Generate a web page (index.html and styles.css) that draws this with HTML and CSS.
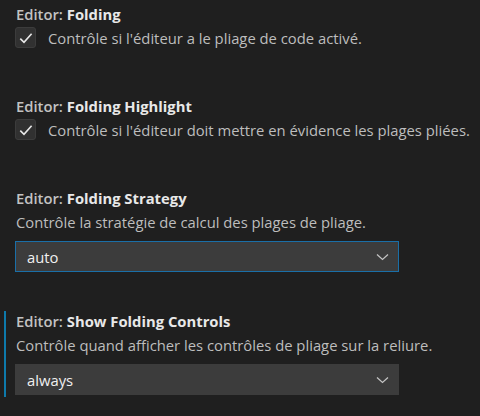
FILE: index.html
```html
<!DOCTYPE html>
<html lang="fr">
<head>
<meta charset="utf-8">
<link rel="stylesheet" href="styles.css">
</head>
<body>
<div class="list">
  <div class="item item-check">
    <div class="title"><span class="cat">Editor: </span><span class="key">Folding</span></div>
    <div class="check-row">
      <span class="checkbox"><svg width="18" height="18" viewBox="0 0 18 18"><path d="M3.3 9.6 L7 13.4 L14.6 4.8" fill="none" stroke="#e8e8e8" stroke-width="1.6"/></svg></span>
      <span class="desc">Contrôle si l'éditeur a le pliage de code activé.</span>
    </div>
  </div>
  <div class="item item-check">
    <div class="title"><span class="cat">Editor: </span><span class="key">Folding Highlight</span></div>
    <div class="check-row">
      <span class="checkbox"><svg width="18" height="18" viewBox="0 0 18 18"><path d="M3.3 9.6 L7 13.4 L14.6 4.8" fill="none" stroke="#e8e8e8" stroke-width="1.6"/></svg></span>
      <span class="desc">Contrôle si l'éditeur doit mettre en évidence les plages pliées.</span>
    </div>
  </div>
  <div class="item item-select">
    <div class="title"><span class="cat">Editor: </span><span class="key">Folding Strategy</span></div>
    <div class="desc block">Contrôle la stratégie de calcul des plages de pliage.</div>
    <div class="select focused"><span>auto</span><svg width="13" height="8" viewBox="0 0 13 8"><path d="M1 1.5 L6.5 6.5 L12 1.5" fill="none" stroke="#c5c5c5" stroke-width="1.2"/></svg></div>
  </div>
  <div class="item item-select row-focused">
    <div class="title"><span class="cat">Editor: </span><span class="key">Show Folding Controls</span></div>
    <div class="desc block">Contrôle quand afficher les contrôles de pliage sur la reliure.</div>
    <div class="select"><span>always</span><svg width="13" height="8" viewBox="0 0 13 8"><path d="M1 1.5 L6.5 6.5 L12 1.5" fill="none" stroke="#c5c5c5" stroke-width="1.2"/></svg></div>
  </div>
</div>
</body>
</html>
```
FILE: styles.css
```css
html, body {
  margin: 0;
  padding: 0;
  background: #1f1f1f;
  width: 480px;
  height: 416px;
  overflow: hidden;
}
body {
  font-family: "Open Sans", "Noto Sans", sans-serif;
  font-size: 14.8px;
  color: #cccccc;
}
.list {
  display: flex;
  flex-direction: column;
  padding-top: 4px;
}
.item {
  margin-left: 4px;
  border-left: 2px solid transparent;
  padding: 0 0 2px 9px;
  display: flex;
  flex-direction: column;
}
.item-check { margin-bottom: 46px; }
.item-select { margin-bottom: 37px; }
.row-focused { border-left-color: #0e7aab; }
.title {
  line-height: 20px;
  height: 20px;
  padding-left: 1px;
  white-space: nowrap;
}
.cat {
  font-weight: 600;
  color: #c2c2c2;
}
.key {
  font-weight: 700;
  color: #e8e8e8;
}
.check-row {
  display: flex;
  align-items: center;
  gap: 12px;
  margin-top: 3px;
}
.checkbox {
  width: 19px;
  height: 19px;
  background: #313131;
  border: 1px solid #3c3c3c;
  border-radius: 3px;
  display: flex;
  align-items: center;
  justify-content: center;
  flex: none;
}
.desc {
  color: #bdbdbd;
  line-height: 20px;
  white-space: nowrap;
}
.desc.block {
  margin-top: 4px;
  padding-left: 1px;
}
.select {
  margin-top: 9px;
  width: 384px;
  height: 31px;
  box-sizing: border-box;
  background: #3c3c3c;
  border: 1px solid #3c3c3c;
  display: flex;
  align-items: center;
  justify-content: space-between;
  padding: 0 9px 0 11px;
  color: #f0f0f0;
}
.select.focused {
  border-color: #1a6fa8;
}
```
